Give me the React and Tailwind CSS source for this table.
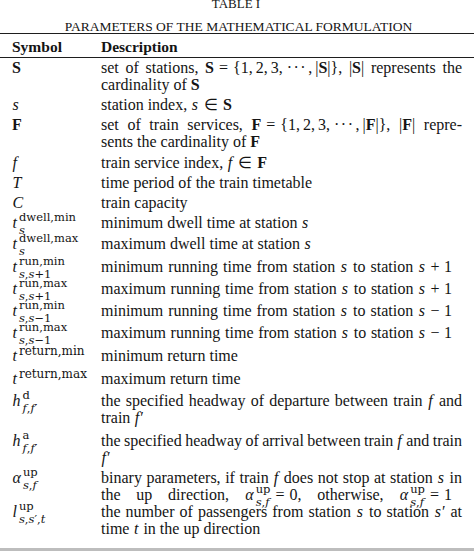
import React from "react";

const I = ({ children }) => <span className="italic ml-[0.5px] mr-[1px]">{children}</span>;
const B = ({ children }) => <span className="font-bold">{children}</span>;
const Rel = ({ children }) => <span className="mx-[5px]">{children}</span>;
const Op = ({ children }) => <span className="mx-[4.5px]">{children}</span>;
const Th = () => <span className="inline-block w-[3px]" />;
const Cd = () => <span className="tracking-[1.5px] mx-[1px]">···</span>;
const Pr = () => <span className="not-italic">′</span>;

const Scr = ({ sup, sub }) => (
  <span className="inline-flex flex-col align-[7px] -my-[7px] ml-[1px] text-[11.5px] leading-[12.5px] font-['DejaVu_Serif',serif] not-italic">
    <span>{sup}</span>
    <span>{sub}</span>
  </span>
);

const Sup = ({ children }) => (
  <span className="align-[6.5px] leading-[0px] ml-[1px] text-[12px] font-['DejaVu_Serif',serif] not-italic">
    {children}
  </span>
);

const SI = ({ children }) => <span className="italic">{children}</span>;

const J = ({ children }) => (
  <div className="text-justify [text-align-last:justify] [word-spacing:-2px]">{children}</div>
);
const J351 = ({ children }) => (
  <div className="w-[351px] text-justify [text-align-last:justify]">{children}</div>
);
const N = ({ children }) => <div className="whitespace-nowrap">{children}</div>;

const Row = ({ h, sym, children }) => (
  <div className={"flex pt-px " + h}>
    <div className="w-[101px] shrink-0 pl-[12px] leading-[17px] whitespace-nowrap">{sym}</div>
    <div className="w-[361px] shrink-0 leading-[17px]">{children}</div>
  </div>
);

const T = ({ sup, sub }) => (
  <>
    <I>t</I>
    <Scr sup={sup} sub={sub} />
  </>
);

const AlphaUp = () => (
  <>
    <I>α</I>
    <Scr
      sup="up"
      sub={
        <>
          <SI>s</SI>,<SI>f</SI>
        </>
      }
    />
  </>
);

export default function App() {
  return (
    <div className="w-[474px] h-[551px] overflow-hidden bg-white text-[#141414] font-['Liberation_Serif',serif] text-[16px]">
      <div className="h-[10px] overflow-hidden flex items-end justify-center">
        <div className="text-[13px] leading-[13px] pr-[2px]">TABLE I</div>
      </div>
      <div className="mt-[10px] text-center text-[13.5px] leading-[13px] pl-[3px]">
        PARAMETERS OF THE MATHEMATICAL FORMULATION
      </div>
      <div className="h-px bg-[#1e1e1e]" />
      <div className="flex h-[23px] pt-[4px] font-bold text-[15.5px] leading-[17px]">
        <div className="w-[101px] pl-[12px]">Symbol</div>
        <div>Description</div>
      </div>
      <div className="h-px bg-[#1e1e1e]" />

      <Row h="h-[37px]" sym={<B>S</B>}>
        <J>
          set of stations, <B>S</B>
          <Rel>=</Rel>
          {"{"}1,<Th />2,<Th />3,<Th />
          <Cd />,<Th />|<B>S</B>|{"}"}, |<B>S</B>| represents the
        </J>
        <N>
          cardinality of <B>S</B>
        </N>
      </Row>

      <Row h="h-[20px]" sym={<I>s</I>}>
        <N>
          station index, <I>s</I>
          <Rel>∈</Rel>
          <B>S</B>
        </N>
      </Row>

      <Row h="h-[38px]" sym={<B>F</B>}>
        <J>
          set of train services, <B>F</B>
          <Rel>=</Rel>
          {"{"}1,<Th />2,<Th />3,<Th />
          <Cd />,<Th />|<B>F</B>|{"}"}, |<B>F</B>| repre-
        </J>
        <N>
          sents the cardinality of <B>F</B>
        </N>
      </Row>

      <Row h="h-[20px]" sym={<I>f</I>}>
        <N>
          train service index, <I>f</I>
          <Rel>∈</Rel>
          <B>F</B>
        </N>
      </Row>

      <Row h="h-[20px]" sym={<I>T</I>}>
        <N>time period of the train timetable</N>
      </Row>

      <Row h="h-[20px]" sym={<I>C</I>}>
        <N>train capacity</N>
      </Row>

      <Row h="h-[21px]" sym={<T sup="dwell,min" sub={<SI>s</SI>} />}>
        <N>
          minimum dwell time at station <I>s</I>
        </N>
      </Row>

      <Row h="h-[23px]" sym={<T sup="dwell,max" sub={<SI>s</SI>} />}>
        <N>
          maximum dwell time at station <I>s</I>
        </N>
      </Row>

      <Row
        h="h-[22px]"
        sym={
          <T
            sup="run,min"
            sub={
              <>
                <SI>s</SI>,<SI>s</SI>+1
              </>
            }
          />
        }
      >
        <J351>
          minimum running time from station <I>s</I> to station <I>s</I>
          <Op>+</Op>1
        </J351>
      </Row>

      <Row
        h="h-[22px]"
        sym={
          <T
            sup="run,max"
            sub={
              <>
                <SI>s</SI>,<SI>s</SI>+1
              </>
            }
          />
        }
      >
        <J351>
          maximum running time from station <I>s</I> to station <I>s</I>
          <Op>+</Op>1
        </J351>
      </Row>

      <Row
        h="h-[22px]"
        sym={
          <T
            sup="run,min"
            sub={
              <>
                <SI>s</SI>,<SI>s</SI>−1
              </>
            }
          />
        }
      >
        <J351>
          minimum running time from station <I>s</I> to station <I>s</I>
          <Op>−</Op>1
        </J351>
      </Row>

      <Row
        h="h-[23px]"
        sym={
          <T
            sup="run,max"
            sub={
              <>
                <SI>s</SI>,<SI>s</SI>−1
              </>
            }
          />
        }
      >
        <J351>
          maximum running time from station <I>s</I> to station <I>s</I>
          <Op>−</Op>1
        </J351>
      </Row>

      <Row
        h="h-[23px]"
        sym={
          <>
            <I>t</I>
            <Sup>return,min</Sup>
          </>
        }
      >
        <N>minimum return time</N>
      </Row>

      <Row
        h="h-[22px]"
        sym={
          <>
            <I>t</I>
            <Sup>return,max</Sup>
          </>
        }
      >
        <N>maximum return time</N>
      </Row>

      <Row
        h="h-[40px]"
        sym={
          <>
            <I>h</I>
            <Scr
              sup="d"
              sub={
                <>
                  <SI>f</SI>,<SI>f</SI>
                  <Pr />
                </>
              }
            />
          </>
        }
      >
        <J>
          the specified headway of departure between train <I>f</I> and
        </J>
        <N>
          train <I>f</I>
          <Pr />
        </N>
      </Row>

      <Row
        h="h-[37px]"
        sym={
          <>
            <I>h</I>
            <Scr
              sup="a"
              sub={
                <>
                  <SI>f</SI>,<SI>f</SI>
                  <Pr />
                </>
              }
            />
          </>
        }
      >
        <J>
          the specified headway of arrival between train <I>f</I> and train
        </J>
        <N>
          <I>f</I>
          <Pr />
        </N>
      </Row>

      <Row h="h-[34px]" sym={<AlphaUp />}>
        <J>
          binary parameters, if train <I>f</I> does not stop at station <I>s</I> in
        </J>
        <J351>
          the up direction, <AlphaUp />
          <Rel>=</Rel>0, otherwise, <AlphaUp />
          <Rel>=</Rel>1
        </J351>
      </Row>

      <Row
        h="h-[46px]"
        sym={
          <>
            <I>l</I>
            <Scr
              sup="up"
              sub={
                <>
                  <SI>s</SI>,<SI>s</SI>
                  <Pr />,<SI>t</SI>
                </>
              }
            />
          </>
        }
      >
        <J>
          the number of passengers from station <I>s</I> to station <I>s</I>
          <Pr /> at
        </J>
        <N>
          time <I>t</I> in the up direction
        </N>
      </Row>

      <div className="h-[3px] bg-[#bdbdbd]" />
    </div>
  );
}
